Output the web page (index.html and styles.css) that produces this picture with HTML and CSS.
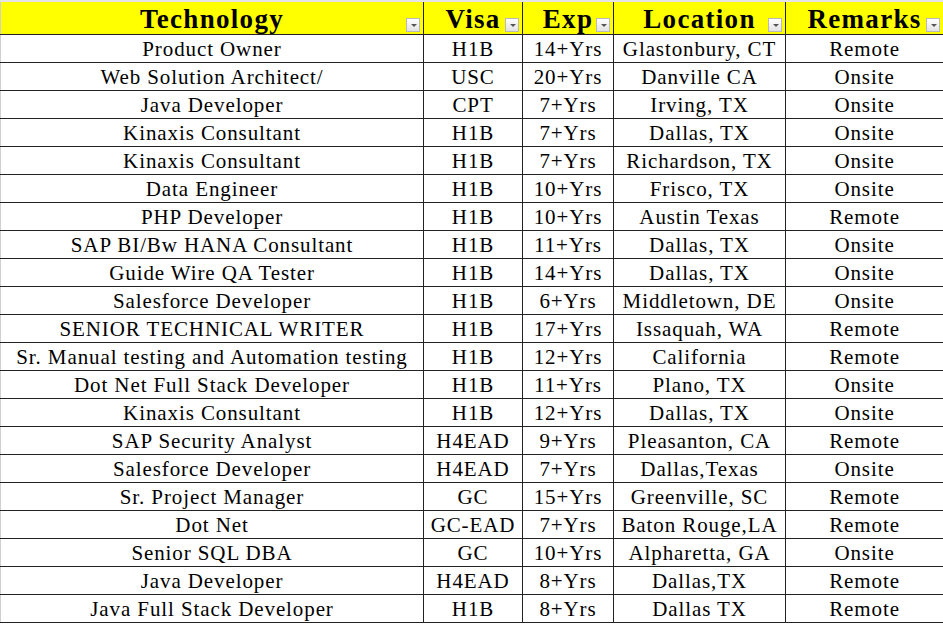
FILE: index.html
```html
<!DOCTYPE html>
<html>
<head>
<meta charset="utf-8">
<link rel="stylesheet" href="styles.css">
</head>
<body>
<table class="sheet">
<colgroup>
<col class="c1"><col class="c2"><col class="c3"><col class="c4"><col class="c5">
</colgroup>
<thead>
<tr>
<th><span class="hd">Technology</span><span class="filter"></span></th>
<th><span class="hd">Visa</span><span class="filter"></span></th>
<th><span class="hd">Exp</span><span class="filter"></span></th>
<th><span class="hd">Location</span><span class="filter"></span></th>
<th><span class="hd">Remarks</span><span class="filter"></span></th>
</tr>
</thead>
<tbody>
<tr><td>Product Owner</td><td>H1B</td><td>14+Yrs</td><td>Glastonbury, CT</td><td>Remote</td></tr>
<tr><td>Web Solution Architect/</td><td>USC</td><td>20+Yrs</td><td>Danville CA</td><td>Onsite</td></tr>
<tr><td>Java Developer</td><td>CPT</td><td>7+Yrs</td><td>Irving, TX</td><td>Onsite</td></tr>
<tr><td>Kinaxis Consultant</td><td>H1B</td><td>7+Yrs</td><td>Dallas, TX</td><td>Onsite</td></tr>
<tr><td>Kinaxis Consultant</td><td>H1B</td><td>7+Yrs</td><td>Richardson, TX</td><td>Onsite</td></tr>
<tr><td>Data Engineer</td><td>H1B</td><td>10+Yrs</td><td>Frisco, TX</td><td>Onsite</td></tr>
<tr><td>PHP Developer</td><td>H1B</td><td>10+Yrs</td><td>Austin Texas</td><td>Remote</td></tr>
<tr><td>SAP BI/Bw HANA Consultant</td><td>H1B</td><td>11+Yrs</td><td>Dallas, TX</td><td>Onsite</td></tr>
<tr><td>Guide Wire QA Tester</td><td>H1B</td><td>14+Yrs</td><td>Dallas, TX</td><td>Onsite</td></tr>
<tr><td>Salesforce Developer</td><td>H1B</td><td>6+Yrs</td><td>Middletown, DE</td><td>Onsite</td></tr>
<tr><td>SENIOR TECHNICAL WRITER</td><td>H1B</td><td>17+Yrs</td><td>Issaquah, WA</td><td>Remote</td></tr>
<tr><td>Sr. Manual testing and Automation testing</td><td>H1B</td><td>12+Yrs</td><td>California</td><td>Remote</td></tr>
<tr><td>Dot Net Full Stack Developer</td><td>H1B</td><td>11+Yrs</td><td>Plano, TX</td><td>Onsite</td></tr>
<tr><td>Kinaxis Consultant</td><td>H1B</td><td>12+Yrs</td><td>Dallas, TX</td><td>Onsite</td></tr>
<tr><td>SAP Security Analyst</td><td>H4EAD</td><td>9+Yrs</td><td>Pleasanton, CA</td><td>Remote</td></tr>
<tr><td>Salesforce Developer</td><td>H4EAD</td><td>7+Yrs</td><td>Dallas,Texas</td><td>Onsite</td></tr>
<tr><td>Sr. Project Manager</td><td>GC</td><td>15+Yrs</td><td>Greenville, SC</td><td>Remote</td></tr>
<tr><td>Dot Net</td><td>GC-EAD</td><td>7+Yrs</td><td>Baton Rouge,LA</td><td>Remote</td></tr>
<tr><td>Senior SQL DBA</td><td>GC</td><td>10+Yrs</td><td>Alpharetta, GA</td><td>Onsite</td></tr>
<tr><td>Java Developer</td><td>H4EAD</td><td>8+Yrs</td><td>Dallas,TX</td><td>Remote</td></tr>
<tr><td>Java Full Stack Developer</td><td>H1B</td><td>8+Yrs</td><td>Dallas TX</td><td>Remote</td></tr>
</tbody>
</table>
</body>
</html>
```
FILE: styles.css
```css
html, body {
  margin: 0;
  padding: 0;
  background: #fff;
}
body {
  width: 943px;
  height: 624px;
  overflow: hidden;
  border-top: 2px solid #e4e4e4;
  box-sizing: border-box;
}
.sheet {
  border-collapse: collapse;
  table-layout: fixed;
  width: 943px;
  font-family: "Liberation Serif", "DejaVu Serif", serif;
  color: #000;
  border-left: 1px solid #cfcfcf;
}
.c1 { width: 423px; }
.c2 { width: 99px; }
.c3 { width: 91px; }
.c4 { width: 172px; }
.c5 { width: 158px; }
.sheet th {
  background: #ffff00;
  height: 32px;
  padding: 0;
  font-size: 27px;
  font-weight: bold;
  letter-spacing: 1.3px;
  text-align: center;
  border-right: 1.5px solid #222;
  border-bottom: 1.5px solid #222;
  position: relative;
  line-height: 32px;
}
.sheet th:last-child { border-right: 1px solid #cfcfcf; }
.hd {
  display: inline-block;
  transform: translateY(1px);
}
.filter {
  position: absolute;
  right: 3px;
  bottom: 2px;
  width: 14px;
  height: 14px;
  box-sizing: border-box;
  border: 1px solid #b9b9b9;
  background: linear-gradient(#ffffff, #e2e2e2);
}
.filter::after {
  content: "";
  position: absolute;
  left: 4px;
  top: 5px;
  border-left: 3px solid transparent;
  border-right: 3px solid transparent;
  border-top: 3px solid #555;
}
.sheet td {
  height: 27px;
  padding: 2px 0 0;
  box-sizing: border-box;
  font-size: 21px;
  letter-spacing: 0.9px;
  line-height: 25px;
  text-align: center;
  white-space: nowrap;
  border-right: 1.5px solid #222;
  border-bottom: 1.5px solid #222;
}
.sheet td:last-child { border-right: 1px solid #cfcfcf; }
```
